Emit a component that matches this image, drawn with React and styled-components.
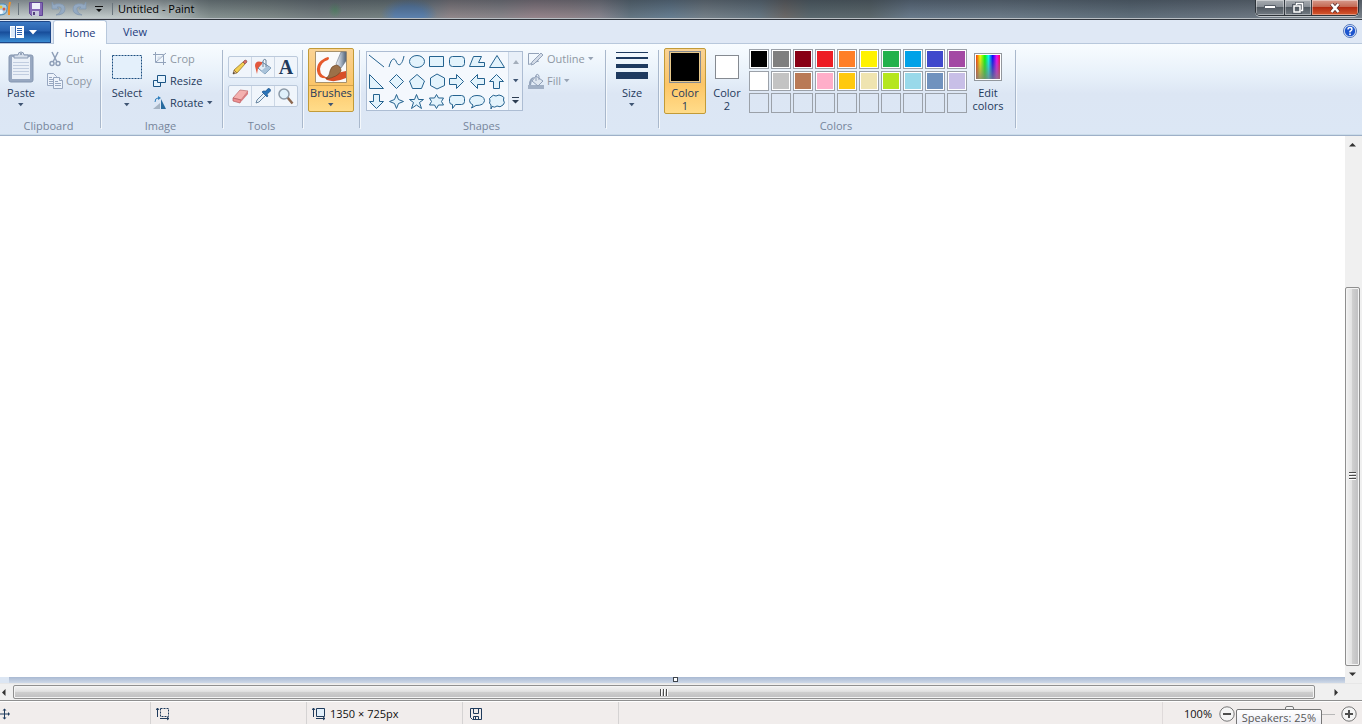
import React from 'react';
import styled, { createGlobalStyle, css } from 'styled-components';

const topColors = ['#000000', '#7f7f7f', '#880015', '#ed1c24', '#ff7f27', '#fff200', '#22b14c', '#00a2e8', '#3f48cc', '#a349a4'];
const lowerColors = ['#ffffff', '#c3c3c3', '#b97a57', '#ffaec9', '#ffc90e', '#efe4b0', '#b5e61d', '#99d9ea', '#7092be', '#c8bfe7'];
const emptyColors = Array(10).fill('');

const shapes = [
    { name: 'Line', d: 'M2 3L17 15' },
    { name: 'Curve', d: 'M2 15C4 7 7 5 9 9C11 15 15 14 17 4' },
    { name: 'Oval', d: 'M2.500 9.500a7.500 6 0 1 0 15 0a7.500 6 0 1 0 -15 0z' },
    { name: 'Rectangle', d: 'M2.500 4.500h14v10h-14z' },
    { name: 'Rounded rectangle', d: 'M5.500 4.500h9q3 0 3 3v4q0 3 -3 3h-9q-3 0 -3 -3v-4q0 -3 3 -3z' },
    { name: 'Polygon', d: 'M2.500 14.500L6.500 4.500H14.500L11.500 10.500H17.500V14.500z' },
    { name: 'Triangle', d: 'M10 3.500L17.500 15.500H2.500z' },
    { name: 'Right triangle', d: 'M2.500 2.500V16.500H16.500z' },
    { name: 'Diamond', d: 'M9.500 2.500L16.500 9.500L9.500 16.500L2.500 9.500z' },
    { name: 'Pentagon', d: 'M10 2.500L17.500 9L14.500 16.500H5.500L2.500 9z' },
    { name: 'Hexagon', d: 'M10 2L17.500 6V13.500L10 17L3.500 13.500V6z' },
    { name: 'Right arrow', d: 'M2.500 6.500H9.500V2.500L16.500 9.500L9.500 16.500V12.500H2.500z' },
    { name: 'Left arrow', d: 'M17.500 6.500H10.500V2.500L3.500 9.500L10.500 16.500V12.500H17.500z' },
    { name: 'Up arrow', d: 'M6.500 16.500V9.500H2.500L9.500 2.500L16.500 9.500H12.500V16.500z' },
    { name: 'Down arrow', d: 'M6.500 2.500V9.500H2.500L9.500 16.500L16.500 9.500H12.500V2.500z' },
    { name: 'Four-point star', d: 'M9.500 2.500L11.500 7.500L16.500 9.500L11.500 11.500L9.500 16.500L7.500 11.500L2.500 9.500L7.500 7.500z' },
    { name: 'Five-point star', d: 'M9.500 2.500L11.500 7.500H16.500L12.500 10.500L14.500 16.500L9.500 13L4.500 16.500L6.500 10.500L2.500 7.500H7.500z' },
    { name: 'Six-point star', d: 'M9.500 2.500L11.500 6H16.500L14.500 9.500L16.500 13H11.500L9.500 16.500L7.500 13H2.500L4.500 9.500L2.500 6H7.500z' },
    { name: 'Rounded callout', d: 'M5.500 3.500h9q3 0 3 3v3q0 3 -3 3h-6l-3 4v-4q-3 0 -3 -3v-3q0 -3 3 -3z' },
    { name: 'Oval callout', d: 'M6 13Q2.500 11.500 2.500 8.500Q3.500 3.500 10 3.500Q17 3.500 17.500 8.500Q17 13.500 9 13.500L4.500 16z' },
    { name: 'Cloud callout', d: 'M4 5Q6 2 9 4Q12 2 15 4Q18 5 16.500 8Q18.500 11 16 13Q13 16 10 14Q8 16 5 14.500L4 17L4 13Q1.500 11 3 9Q1.500 6 4 5z' },
];

const CaretIcon = ({ color = '#3f5573' }) => (
    <svg width="6" height="4" viewBox="0 0 6 4" fill={color} aria-hidden="true"><path d="M0 0h5.500L2.750 3.300z" /></svg>
);

const PaletteIcon = () => (
    <svg width="12" height="16" viewBox="0 0 12 16" aria-hidden="true">
        <path d="M-4 8Q-3 2 4 3Q8 4 7 8Q7 14 0 14Z" fill="#a9cfe8" stroke="#4a86b0" />
        <circle cx="1" cy="6" r="1.500" fill="#e9c63f" /><circle cx="4" cy="8" r="1.500" fill="#d45c48" /><circle cx="1" cy="11" r="2" fill="#f4f7fa" />
        <path d="M9 1h2l-1 5v8H8V6z" fill="#ec912e" />
    </svg>
);

const SaveIcon = () => (
    <svg width="16" height="16" viewBox="0 0 16 16" aria-hidden="true">
        <path d="M1.500 1.500h13v13h-11l-2-2z" fill="#8467b5" stroke="#5f4594" />
        <path d="M4 2h8v6H4z" fill="#eef0fa" /><path d="M4 10h7v5H4z" fill="#c7c9dc" /><path d="M5 11h2v3H5z" fill="#54407f" />
    </svg>
);

const UndoIcon = ({ flip }) => (
    <svg width="16" height="16" viewBox="0 0 16 16" aria-hidden="true">
        <path transform={flip ? 'translate(16 0) scale(-1 1)' : undefined} d="M2 1v7h7L7 6q5-1 4 3t-5 5q9 0 9-6T6 3L4 4z" fill="#93a9c2" stroke="#7f95ae" strokeWidth=".7" />
    </svg>
);

const PasteIcon = () => (
    <svg width="26" height="32" viewBox="0 0 26 32" aria-hidden="true">
        <rect x="1" y="4" width="24" height="27" rx="2" fill="#98a8c1" stroke="#8596b0" />
        <path d="M4 6h18v22H4z" fill="#eaf0f8" />
        <path d="M5 11.500h16M5 14.500h16M5 17.500h16M5 20.500h16M5 23.500h16" stroke="#c1cde0" />
        <path d="M6 7V4h4q0-3 3-3t3 3h4v3z" fill="#d4ddea" stroke="#8a9ab3" />
        <circle cx="13" cy="3" r="1" fill="#8090aa" />
    </svg>
);

const CutIcon = () => (
    <svg width="16" height="16" viewBox="0 0 16 16" fill="none" stroke="#8f9fb8" aria-hidden="true">
        <path d="M5 1l5 10M11 1L6 11" strokeWidth="1.500" /><circle cx="5" cy="12.500" r="2" strokeWidth="1.500" /><circle cx="11" cy="12.500" r="2" strokeWidth="1.500" />
    </svg>
);

const CopyIcon = () => (
    <svg width="16" height="16" viewBox="0 0 16 16" fill="#edf3fb" stroke="#97a7c0" aria-hidden="true">
        <path d="M.5.5h6l3 3v9h-9z" /><path d="M2 4.500h3M2 6.500h4M2 8.500h4M2 10.500h4" />
        <path d="M6.500 4.500h6l3 3v8h-9z" /><path d="M12.500 4.500v3h3M8 8.500h3M8 10.500h6M8 12.500h6" />
    </svg>
);

const SelectIcon = () => (
    <svg width="30" height="32" viewBox="0 0 30 32" aria-hidden="true">
        <path d="M.5 4.500h29v23H.5z" fill="#e4f0fb" stroke="#1c4e80" strokeDasharray="2 1" />
    </svg>
);

const CropIcon = () => (
    <svg width="14" height="14" viewBox="0 0 14 14" fill="none" stroke="#93a3bb" aria-hidden="true">
        <path d="M2.500 0v10.500H13M0 2.500h10.500V13M3 10L13 1" /><path d="M4.500 4.500v4l4-4z" fill="#d5deeb" stroke="none" />
    </svg>
);

const ResizeIcon = () => (
    <svg width="14" height="14" viewBox="0 0 14 14" fill="#e6f3fd" stroke="#1c5585" aria-hidden="true">
        <path d="M.5 6.500h7v6h-7z" /><path d="M4.500 1.500h8v7h-8z" />
    </svg>
);

const RotateIcon = () => (
    <svg width="14" height="14" viewBox="0 0 14 14" aria-hidden="true">
        <path d="M0 13h7V7z" fill="#a5b3c3" /><path d="M8 13V3l5 10z" fill="#286b9f" /><path d="M2 6Q2 2 5 2" fill="none" stroke="#2f7fbd" /><path d="M5 0l3 2-3 2z" fill="#2f7fbd" />
    </svg>
);

const PencilIcon = () => (
    <svg width="18" height="18" viewBox="0 0 18 18" aria-hidden="true">
        <path d="M2 16l1-4 3 3z" fill="#e8c08e" stroke="#6b5238" strokeWidth=".6" /><path d="M3 12l9-8 2 2-8 9z" fill="#f3cf52" stroke="#8c6a1d" strokeWidth=".7" />
        <path d="M12 4l2-2q2 0 2 2l-2 2z" fill="#d96d62" stroke="#7d4540" strokeWidth=".6" /><path d="M2 16l.7-2L4 15z" fill="#222" />
    </svg>
);

const BucketIcon = () => (
    <svg width="18" height="18" viewBox="0 0 18 18" aria-hidden="true">
        <path d="M8 4l9 6-6 6-7-6z" fill="#e2edf6" stroke="#6386a7" /><path d="M11 16l6-6-4-2-6 5z" fill="#a9c3da" />
        <path d="M9 9V3q1-3 3-1v7" fill="none" stroke="#6b8299" />
        <path d="M8 4Q1 2 1 8l2 8 1-6 4-4z" fill="#e2583d" />
    </svg>
);

const EraserIcon = () => (
    <svg width="18" height="18" viewBox="0 0 18 18" aria-hidden="true">
        <path d="M2 11L9 3l8 1-7 9z" fill="#f4b0ae" stroke="#bd6a6c" strokeWidth=".7" /><path d="M2 11l8 2-1 3-7-2z" fill="#ed8f90" stroke="#b75a5e" strokeWidth=".7" /><path d="M10 13l7-9v3l-8 9z" fill="#d87a7e" />
    </svg>
);

const DropperIcon = () => (
    <svg width="18" height="18" viewBox="0 0 18 18" aria-hidden="true">
        <path d="M2 16l1-3 7-7 2 2-7 7z" fill="#e8f2fa" stroke="#5b7a97" strokeWidth=".9" /><path d="M8 5l5 5 1-1-1-2q5-3 3-5t-4 2l-3 0z" fill="#2a73b8" stroke="#174b80" strokeWidth=".6" />
    </svg>
);

const MagnifierIcon = () => (
    <svg width="18" height="18" viewBox="0 0 18 18" aria-hidden="true">
        <path d="M10.500 10.500l5 6" stroke="#8c6850" strokeWidth="2.500" /><circle cx="7" cy="7" r="5" fill="#dff0fb" stroke="#8b99a7" strokeWidth="1.500" />
    </svg>
);

const BrushIcon = () => (
    <svg width="32" height="32" viewBox="0 0 32 32" aria-hidden="true">
        <defs>
            <linearGradient id="handle"><stop offset="0" stopColor="#f1f4f8" /><stop offset=".5" stopColor="#a6b3c3" /><stop offset="1" stopColor="#536377" /></linearGradient>
        </defs>
        <path d="M.5.5h31v31H.5z" fill="#fafafa" stroke="#a8916a" />
        <path d="M13 6Q1 10 2 20Q3 29 15 27Q5 26 5 18Q6 11 13 9Q15 7 13 6z" fill="#e65a2c" />
        <path d="M10 27Q16 24 22 22L31 20V27Q20 32 12 29z" fill="#d84e27" />
        <path d="M26 1h5v9l-5 7-5-4z" fill="url(#handle)" stroke="#6b7684" strokeWidth=".6" />
        <path d="M21 14q5 1 5 6-3 6-15 8 4-4 4-8 1-5 6-6z" fill="#9b7048" stroke="#714727" strokeWidth=".7" />
    </svg>
);

const OutlineIcon = () => (
    <svg width="16" height="16" viewBox="0 0 16 16" fill="none" stroke="#94a3b9" aria-hidden="true">
        <path d="M11 2.500H.5v11L11 10" /><path d="M3 14l1-3 9-9 2 2-9 9z" fill="#d4dce8" />
    </svg>
);

const FillIcon = () => (
    <svg width="16" height="16" viewBox="0 0 16 16" aria-hidden="true">
        <path d="M0 12h16v4H0z" fill="#a1b0c5" /><path d="M8 3l7 5-5 5-6-5z" fill="#dfe7f0" stroke="#8f9fb7" /><path d="M8 8V2q2-2 3 1v4" fill="none" stroke="#8f9fb7" /><path d="M7 4Q1 4 1 12h2l1-5z" fill="#93a3ba" />
    </svg>
);

const SizeIcon = () => (
    <svg width="32" height="32" viewBox="0 0 32 32" fill="#1e3a5f" aria-hidden="true">
        <path d="M0 1h32v1H0zM0 6h32v2H0zM0 13h32v4H0zM0 21h32v7H0z" />
    </svg>
);

const MoveIcon = () => (
    <svg width="12" height="12" viewBox="0 0 12 12" aria-hidden="true">
        <path d="M4.500 1v10M0 6h9" stroke="#1f3b5c" /><path d="M2.500 2.500l2-2 2 2zM2.500 9.500l2 2 2-2zM8 4l2 2-2 2z" fill="#1f3b5c" />
    </svg>
);

const SelectionSizeIcon = ({ dashed }) => (
    <svg width="14" height="14" viewBox="0 0 14 14" fill="none" stroke="#1f3b5c" aria-hidden="true">
        <path d="M4.500 1.500h8v8h-8z" fill={dashed ? 'none' : '#e1effa'} strokeDasharray={dashed ? '2 1' : undefined} />
        <path d="M1.500 1v9M0 3l1.500-2L3 3M4 11.500h9M11 10l2 1.500L11 13" />
    </svg>
);

const DiskIcon = () => (
    <svg width="14" height="12" viewBox="0 0 14 12" fill="none" stroke="#1f3b5c" aria-hidden="true">
        <path d="M2.500.5h11v11h-9l-2-2zM5.500.500v5h5v-5M5.500 11V8.500h5V11M7.500 9v2" />
    </svg>
);

const ArrowIcon = ({ angle = 0 }) => (
    <svg width="7" height="7" viewBox="0 0 7 7" aria-hidden="true"><path transform={`rotate(${angle} 3.5 3.5)`} d="M0 5.500L3.500 2L7 5.500z" fill="#333" /></svg>
);

const ZoomIcon = ({ plus }) => (
    <svg width="16" height="16" viewBox="0 0 16 16" aria-hidden="true">
        <circle cx="8" cy="8" r="7.200" fill="#f4f4f4" stroke="#777" /><path d={plus ? 'M4 8h8M8 4v8' : 'M4 8h8'} stroke="#4d4d4d" strokeWidth="2" />
    </svg>
);

const HelpIcon = () => (
    <svg width="14" height="14" viewBox="0 0 14 14" aria-hidden="true">
        <circle cx="7" cy="7" r="6.500" fill="#dce9fb" stroke="#5577b8" /><circle cx="7" cy="7" r="5.200" fill="#1d55ce" />
        <path d="M5 5.500q0-2 2-2t2 1.700Q9 6.500 7 7.500v1" fill="none" stroke="#fff" strokeWidth="1.400" /><circle cx="7" cy="10.200" r=".9" fill="#fff" />
    </svg>
);

const BigTool = ({ icon, label, caret, ...rest }) => (
    <BigButton {...rest}>
        {icon}
        <BigLabel>{label}</BigLabel>
        {caret && <CaretIcon />}
    </BigButton>
);

const App = () => {
    return (
        <>
            <GlobalStyle />
            <Window>
                <TitleBar>
                    <QuickAccess>
                        <PaletteIcon />
                        <TitleDivider />
                        <QuickButton aria-label="Save"><SaveIcon /></QuickButton>
                        <QuickButton aria-label="Undo"><UndoIcon /></QuickButton>
                        <QuickButton aria-label="Redo"><UndoIcon flip /></QuickButton>
                        <QuickButton aria-label="Customize toolbar">
                            <svg width="8" height="6" viewBox="0 0 8 6"><path d="M0 0h8v1H0zM1 3h6L4 6z" fill="#111" /></svg>
                        </QuickButton>
                        <TitleDivider />
                    </QuickAccess>
                    <Title>Untitled - Paint</Title>
                    <WindowButtons>
                        <WindowButton $width={29} aria-label="Minimize">
                            <svg width="12" height="5" viewBox="0 0 12 5"><path d="M.5.5h11v3H.5z" fill="#fff" stroke="#555c66" /></svg>
                        </WindowButton>
                        <WindowButton $width={27} aria-label="Restore">
                            <svg width="12" height="12" viewBox="0 0 12 12" fill="none"><path d="M4.500 3V1.500h6v7H9M1.500 3.500h7v7h-7z" stroke="#555c66" strokeWidth="3" /><path d="M4.500 3V1.500h6v7H9M2 4h6v6H2z" stroke="#fff" strokeWidth="1.500" /></svg>
                        </WindowButton>
                        <WindowButton $width={46} $close aria-label="Close">
                            <svg width="12" height="10" viewBox="0 0 12 10"><path d="M2.500 1l7 8M9.500 1l-7 8" stroke="#5e3535" strokeWidth="4" /><path d="M2.500 1l7 8M9.500 1l-7 8" stroke="#fff" strokeWidth="2.500" /></svg>
                        </WindowButton>
                    </WindowButtons>
                </TitleBar>

                <TabBar>
                    <FileButton aria-label="Paint menu">
                        <svg width="14" height="12" viewBox="0 0 14 12"><path d="M0 0h14v12H0z" fill="#fff" /><path d="M5.500 0v12" stroke="#2f62ad" /><path d="M7 2.500h5M7 4.500h5M7 6.500h5M7 8.500h5" stroke="#2f62ad" /><path d="M1 1h4v10H1z" fill="#dbe9f8" /></svg>
                        <svg width="8" height="5" viewBox="0 0 8 5"><path d="M0 0h8L4 4.500z" fill="#fff" /></svg>
                    </FileButton>
                    <Tab $active>Home</Tab>
                    <Tab>View</Tab>
                    <HelpButton aria-label="Help"><HelpIcon /></HelpButton>
                </TabBar>

                <Ribbon>
                    <Group $width={102}>
                        <GroupBody $flush>
                            <BigTool icon={<PasteIcon />} label="Paste" caret />
                            <Stack>
                                <SmallButton disabled><CutIcon />Cut</SmallButton>
                                <SmallButton disabled><CopyIcon />Copy</SmallButton>
                            </Stack>
                        </GroupBody>
                        <GroupLabel>Clipboard</GroupLabel>
                    </Group>
                    <Group $width={122}>
                        <GroupBody>
                            <BigTool icon={<SelectIcon />} label="Select" caret />
                            <Stack>
                                <SmallButton disabled><CropIcon />Crop</SmallButton>
                                <SmallButton><ResizeIcon />Resize</SmallButton>
                                <SmallButton><RotateIcon />Rotate<CaretIcon /></SmallButton>
                            </Stack>
                        </GroupBody>
                        <GroupLabel>Image</GroupLabel>
                    </Group>
                    <Group $width={80}>
                        <GroupBody>
                            <ToolRows>
                                <ToolRow>
                                    <ToolButton aria-label="Pencil"><PencilIcon /></ToolButton>
                                    <ToolButton aria-label="Fill with color"><BucketIcon /></ToolButton>
                                    <ToolButton aria-label="Text"><TextGlyph>A</TextGlyph></ToolButton>
                                </ToolRow>
                                <ToolRow>
                                    <ToolButton aria-label="Eraser"><EraserIcon /></ToolButton>
                                    <ToolButton aria-label="Color picker"><DropperIcon /></ToolButton>
                                    <ToolButton aria-label="Magnifier"><MagnifierIcon /></ToolButton>
                                </ToolRow>
                            </ToolRows>
                        </GroupBody>
                        <GroupLabel>Tools</GroupLabel>
                    </Group>
                    <Group $width={57}>
                        <GroupBody>
                            <BigTool icon={<BrushIcon />} label="Brushes" caret $width={46} $selected $split />
                        </GroupBody>
                    </Group>
                    <Group $width={246}>
                        <GroupBody>
                            <Gallery>
                                <ShapeGrid>
                                    {shapes.map((shape) => (
                                        <ShapeButton key={shape.name} aria-label={shape.name}>
                                            <svg width="20" height="20" viewBox="0 0 20 20"><path d={shape.d} fill={shape.d.endsWith('z') ? '#e3f3fc' : 'none'} stroke="#24628f" /></svg>
                                        </ShapeButton>
                                    ))}
                                </ShapeGrid>
                                <GalleryScroll>
                                    <GalleryButton disabled aria-label="Previous row"><svg width="6" height="4" viewBox="0 0 6 4"><path d="M0 4h6L3 0z" fill="#a4aebb" /></svg></GalleryButton>
                                    <GalleryButton aria-label="Next row"><CaretIcon /></GalleryButton>
                                    <GalleryButton aria-label="More shapes"><svg width="7" height="7" viewBox="0 0 7 7"><path d="M0 0h7v1H0zM0 3h7L3.500 6.500z" fill="#2d3d52" /></svg></GalleryButton>
                                </GalleryScroll>
                            </Gallery>
                            <Stack>
                                <SmallButton disabled><OutlineIcon />Outline<CaretIcon color="#97a3b4" /></SmallButton>
                                <SmallButton disabled><FillIcon />Fill<CaretIcon color="#97a3b4" /></SmallButton>
                            </Stack>
                        </GroupBody>
                        <GroupLabel>Shapes</GroupLabel>
                    </Group>
                    <Group $width={53}>
                        <GroupBody>
                            <BigTool icon={<SizeIcon />} label="Size" caret />
                        </GroupBody>
                    </Group>
                    <Group $width={357}>
                        <GroupBody>
                            <BigTool icon={<ColorBox><Well $size={32} $color="#000" $active /></ColorBox>} label={<>Color<br />1</>} $selected />
                            <BigTool icon={<ColorBox><Well $size={24} $color="#fff" /></ColorBox>} label={<>Color<br />2</>} />
                            <Palette>
                                {[...topColors, ...lowerColors, ...emptyColors].map((color, i) => (
                                    <Swatch key={i} $color={color} aria-label={color || 'Empty color'} />
                                ))}
                            </Palette>
                            <BigTool icon={<ColorBox><Spectrum /></ColorBox>} label={<>Edit<br />colors</>} />
                        </GroupBody>
                        <GroupLabel>Colors</GroupLabel>
                    </Group>
                </Ribbon>

                <Workspace>
                    <CanvasColumn>
                        <Canvas />
                        <CanvasEdge><Handle /></CanvasEdge>
                    </CanvasColumn>
                    <VerticalScroll>
                        <ScrollButton aria-label="Scroll up"><ArrowIcon /></ScrollButton>
                        <ScrollSpace $grow={134} />
                        <VerticalThumb><Grip $vertical><i /><i /><i /></Grip></VerticalThumb>
                        <ScrollButton aria-label="Scroll down"><ArrowIcon angle={180} /></ScrollButton>
                    </VerticalScroll>
                </Workspace>
                <HorizontalScroll>
                    <ScrollButton $narrow aria-label="Scroll left"><ArrowIcon angle={270} /></ScrollButton>
                    <HorizontalThumb><Grip><i /><i /><i /></Grip></HorizontalThumb>
                    <ScrollSpace $grow={14} />
                    <ScrollButton aria-label="Scroll right"><ArrowIcon angle={90} /></ScrollButton>
                </HorizontalScroll>

                <StatusBar>
                    <StatusCell $first><MoveIcon /></StatusCell>
                    <StatusCell><SelectionSizeIcon dashed /></StatusCell>
                    <StatusCell><SelectionSizeIcon />1350 × 725px</StatusCell>
                    <StatusCell><DiskIcon /></StatusCell>
                    <ZoomPane>
                        <label htmlFor="zoom">100%</label>
                        <ZoomButton aria-label="Zoom out"><ZoomIcon /></ZoomButton>
                        <ZoomSlider id="zoom" type="range" min="0" max="100" defaultValue="52" />
                        <ZoomButton aria-label="Zoom in"><ZoomIcon plus /></ZoomButton>
                        <Tooltip role="tooltip">Speakers: 25%</Tooltip>
                    </ZoomPane>
                </StatusBar>
            </Window>
        </>
    );
}

const GlobalStyle = createGlobalStyle`
    * {
        box-sizing: border-box;
    }
    body {
        margin: 0;
        font-family: "Open Sans", "Noto Sans", sans-serif;
        font-size: 11px;
        line-height: 16px;
        color: #1e395b;
    }
    button {
        display: flex;
        align-items: center;
        justify-content: center;
        margin: 0;
        padding: 0;
        border: none;
        background: none;
        color: inherit;
        font: inherit;
    }
    svg {
        display: block;
        flex: none;
    }
`

const Window = styled.div`
    display: flex;
    flex-direction: column;
    min-height: 100vh;
    overflow: hidden;
    background: #fff;
`

const TitleBar = styled.header`
    display: flex;
    align-items: flex-start;
    height: 20px;
    color: #000;
    border-bottom: 1px solid #30353c;
    box-shadow: inset 0 -1px #b9bfc4;
    background:
        linear-gradient(rgba(36, 44, 54, 0.45), transparent 90%),
        radial-gradient(ellipse 7px 8px at 335px 10px, #5b8a6c, transparent),
        radial-gradient(ellipse 28px 16px at 409px 14px, #5b80ac 50%, transparent),
        linear-gradient(90deg, #c3cccc 0, #bdc6c6 150px, #84908f 210px, #7d8887 270px, #737c7f 320px, #748080 380px, #75828c 425px, #8f8689 450px, #88858a 500px, #94838a 535px, #8f8389 570px, #86848d 600px, #647581 630px, #667d90 670px, #747f87 705px, #667681 760px, #6a6867 785px, #5a686e 810px, #5c686c 870px, #68798a 910px, #6b7a87 1000px, #5f6e7a 1130px, #66727e 1200px, #777f87 100%);
`

const QuickAccess = styled.div`
    display: flex;
    align-items: center;
    height: 18px;
`

const TitleDivider = styled.span`
    width: 1px;
    height: 12px;
    margin: 0 4px 0 6px;
    background: #69747c;
`

const QuickButton = styled.button`
    width: 22px;
    height: 18px;
    padding-left: 3px;

    & + & + & + & {
        width: 17px;
    }
`

const Title = styled.div`
    flex: 1;
    padding: 1px 0 0 1px;
    text-shadow: 0 0 6px #d8dfe0;
`

const WindowButtons = styled.div`
    display: flex;
    margin-right: 3px;
    border: 1px solid #2c3238;
    border-top: none;
    border-radius: 0 0 5px 5px;
    overflow: hidden;
    box-shadow: 0 1px #c2c7cb;
`

const WindowButton = styled.button`
    width: ${({ $width }) => $width}px;
    height: 15px;
    border-right: 1px solid #343a42;
    box-shadow: inset 0 0 0 1px rgba(255, 255, 255, 0.4);
    background: ${({ $close }) => $close
        ? 'linear-gradient(#d79a8c, #c46a54 45%, #b32b12 50%, #d75a2f)'
        : 'linear-gradient(#a6abb0, #898f96 45%, #515961 50%, #747c84)'};

    &:last-child {
        border-right: none;
    }
`

const TabBar = styled.nav`
    display: flex;
    align-items: flex-end;
    height: 24px;
    padding-right: 5px;
    background: #dfe8f5;
    border-bottom: 1px solid #b8c8dc;
`

const FileButton = styled.button`
    gap: 5px;
    width: 51px;
    height: 22px;
    padding-right: 4px;
    margin-right: 2px;
    border: 1px solid #1e4788;
    border-left: none;
    border-radius: 0 2px 0 0;
    background: linear-gradient(#3d7ac4, #2861ae 45%, #174c99 50%, #398bd2);
`

const Tab = styled.button`
    width: 54px;
    height: 22px;
    padding-left: 2px;
    color: #1b3b7c;

    ${({ $active }) => $active && css`
        height: 24px;
        margin-bottom: -1px;
        padding-left: 0;
        border: 1px solid #b8c8dc;
        border-bottom: none;
        border-radius: 3px 3px 0 0;
        background: linear-gradient(#fff, #f8fcff);
    `}
`

const HelpButton = styled.button`
    margin: 0 0 5px auto;
`

const Ribbon = styled.div`
    display: flex;
    height: 92px;
    padding: 4px 0 1px;
    border-bottom: 1px solid #9eb0c8;
    box-shadow: inset 0 -1px #cbdcea;
    background: linear-gradient(#f8fcff, #e8f1fa 30px, #dce6f4 50px, #dce7f5);
`

const Group = styled.section`
    display: flex;
    flex-direction: column;
    flex: none;
    width: ${({ $width }) => $width}px;
    border-right: 1px solid #f4f8fc;
    border-image: linear-gradient(transparent 2px, #f4f8fc 2px, #f4f8fc 80px, transparent 80px) 1;
    background: linear-gradient(#a9b8cc, #a9b8cc) right 2px / 1px 78px no-repeat;
    padding-right: 1px;
`

const GroupBody = styled.div`
    display: flex;
    flex: none;
    height: 70px;
    padding-left: ${({ $flush }) => $flush ? 0 : 4}px;
`

const GroupLabel = styled.div`
    text-align: center;
    color: #76859b;
    padding-right: 3px;
`

const BigButton = styled.button`
    flex-direction: column;
    justify-content: flex-start;
    width: ${({ $width }) => $width || 42}px;
    height: ${({ $split }) => $split ? 64 : 66}px;
    padding-top: 3px;

    ${({ $selected }) => $selected && css`
        padding-top: 2px;
        border: 1px solid #c29b38;
        border-radius: 2px;
        background: linear-gradient(#fad395, #fbc568 55%, #fdc86a 60%, #ffdc8a);
    `}

    ${({ $split }) => $split && css`
        background: linear-gradient(#fad395, #fbc568 36px, #d3a452 36px, #d3a452 37px, #fdc86a 37px, #ffdc8a);
    `}
`

const BigLabel = styled.span`
    flex: none;
    line-height: 13px;
    margin: 3px 0 4px;
`

const Stack = styled.div`
    display: flex;
    flex-direction: column;
    align-items: flex-start;
    padding-left: 1px;
`

const SmallButton = styled.button`
    height: 22px;
    gap: 3px;
    padding-left: 4px;

    &:disabled {
        color: #8e97a3;
    }
`

const ToolRows = styled.div`
    display: flex;
    flex-direction: column;
    gap: 7px;
    padding-top: 8px;
`

const ToolRow = styled.div`
    display: flex;
    height: 22px;
    border: 1px solid #bccadc;
    border-radius: 2px;
    background: #f0f5fb;
`

const ToolButton = styled.button`
    width: 23px;

    & + & {
        border-left: 1px solid #ccd7e5;
    }

    &:first-child {
        width: 22px;
    }
`

const TextGlyph = styled.span`
    font-family: "Liberation Serif", serif;
    font-size: 20px;
    font-weight: bold;
    line-height: 20px;
`

const Gallery = styled.div`
    display: flex;
    height: 60px;
    margin: 3px 0 0 1px;
    border: 1px solid #adbdd3;
    background: #f4f8fd;
`

const ShapeGrid = styled.div`
    display: grid;
    grid-template-columns: repeat(7, 20px);
    grid-template-rows: repeat(3, 20px);
    width: 141px;
    height: 58px;
`

const ShapeButton = styled.button`
    width: 20px;
    height: 20px;
`

const GalleryScroll = styled.div`
    display: flex;
    flex-direction: column;
    width: 14px;
    border-left: 1px solid #ccd8e7;
    background: #e8eff8;
`

const GalleryButton = styled.button`
    flex: 1;
`

const ColorBox = styled.span`
    display: flex;
    flex: none;
    align-items: center;
    justify-content: center;
    width: 32px;
    height: 32px;
`

const Well = styled.span`
    width: ${({ $size }) => $size}px;
    height: ${({ $size }) => $size}px;
    border: 1px solid #858a91;
    box-shadow: inset 0 0 0 1px ${({ $active }) => $active ? '#e9c98a' : '#fff'};
    background: ${({ $color }) => $color};
`

const Palette = styled.div`
    display: grid;
    grid-template-columns: repeat(10, 20px);
    grid-auto-rows: 20px;
    gap: 2px;
    margin: 1px 0 0 1px;
`

const Swatch = styled.button`
    border: 1px solid #9ba1a9;
    background: ${({ $color }) => $color || 'transparent'};
    box-shadow: ${({ $color }) => $color ? 'inset 0 0 0 1px #fff' : 'none'};
`

const Spectrum = styled.span`
    width: 28px;
    height: 28px;
    border: 1px solid #92979d;
    outline: 1px solid #fff;
    outline-offset: -2px;
    background:
        linear-gradient(transparent, rgba(128, 128, 128, 0.85)),
        linear-gradient(90deg, #f00, #ff0 20%, #0f0 38%, #0ff 52%, #00f 68%, #f0f 84%, #f00);
`

const Workspace = styled.main`
    display: flex;
    flex: 1;
`

const CanvasColumn = styled.div`
    display: flex;
    flex-direction: column;
    flex: 1;
`

const Canvas = styled.div`
    flex: 1;
    background: #fff;
`

const CanvasEdge = styled.div`
    display: flex;
    justify-content: center;
    height: 6px;
    padding-left: 6px;
    background: linear-gradient(90deg, #dce6f3 9px, transparent 9px), linear-gradient(#a9b9d2, #ced9e8);
`

const Handle = styled.span`
    width: 5px;
    height: 5px;
    border: 1px solid #3e444c;
    background: #fff;
`

const VerticalScroll = styled.div`
    display: flex;
    flex-direction: column;
    width: 17px;
    padding: 0 2px 0 0;
    background: #f0f0f0;
`

const HorizontalScroll = styled.div`
    display: flex;
    height: 18px;
    padding: 1px 18px 1px 0;
    background: #f0f0f0;
    border-bottom: 1px solid #8f8f8f;
    border-top: 1px solid #e7e7e7;
`

const ScrollButton = styled.button`
    flex: none;
    width: ${({ $narrow }) => $narrow ? 13 : 15}px;
    height: 17px;
    padding-right: ${({ $narrow }) => $narrow ? 6 : 0}px;

    ${HorizontalScroll} & {
        height: 14px;
    }
`

const ScrollSpace = styled.div`
    flex: ${({ $grow }) => $grow} 1 0px;
`

const thumb = css`
    display: flex;
    align-items: center;
    justify-content: center;
    border: 1px solid #8f8f8f;
    border-radius: 2px;
    box-shadow: inset 0 0 0 1px #f4f4f4;
`

const VerticalThumb = styled.div`
    ${thumb}
    flex: 378 1 0px;
    background: linear-gradient(90deg, #f2f2f2, #e2e2e2 45%, #cfcfcf 50%, #bebec0);
`

const HorizontalThumb = styled.div`
    ${thumb}
    flex: 1301 1 0px;
    background: linear-gradient(#f2f2f2, #e2e2e2 45%, #cfcfcf 50%, #bebec0);
`

const Grip = styled.span`
    display: flex;
    flex-direction: ${({ $vertical }) => $vertical ? 'column' : 'row'};
    gap: 1px;

    i {
        width: ${({ $vertical }) => $vertical ? 7 : 2}px;
        height: ${({ $vertical }) => $vertical ? 2 : 7}px;
        border: 0 solid #fff;
        border-width: ${({ $vertical }) => $vertical ? '0 0 1px' : '0 1px 0 0'};
        background: #4b4b4b;
    }
`

const StatusBar = styled.footer`
    display: flex;
    align-items: stretch;
    height: 23px;
    color: #111;
    background: #f1edec;
    border-top: 1px solid #fff;
`

const StatusCell = styled.div`
    display: flex;
    align-items: center;
    gap: 4px;
    width: ${({ $first }) => $first ? 151 : 156}px;
    padding: 2px 0 0 ${({ $first }) => $first ? 0 : 5}px;
    border-right: 1px solid #d5d3d3;
`

const ZoomPane = styled.div`
    position: relative;
    display: flex;
    align-items: center;
    gap: 6px;
    margin-left: auto;
    padding: 2px 5px 0 21px;
    border-left: 1px solid #dfdada;

    label {
        padding-right: 1px;
    }
`

const ZoomButton = styled.button`
    width: 16px;
    height: 16px;
`

const ZoomSlider = styled.input`
    appearance: none;
    width: 94px;
    height: 16px;
    margin: 0;
    background: linear-gradient(#b8b8b8, #b8b8b8) center / 100% 1px no-repeat;

    &::-webkit-slider-thumb {
        appearance: none;
        width: 9px;
        height: 17px;
        border: 1px solid #777;
        border-radius: 2px;
        background: #f6f6f6;
    }
`

const Tooltip = styled.div`
    position: absolute;
    top: 7px;
    right: 40px;
    height: 20px;
    padding: 0 5px;
    color: #575757;
    border: 1px solid #767676;
    border-radius: 2px;
    background: linear-gradient(#fff, #e9eaf2);
`

export default App;
